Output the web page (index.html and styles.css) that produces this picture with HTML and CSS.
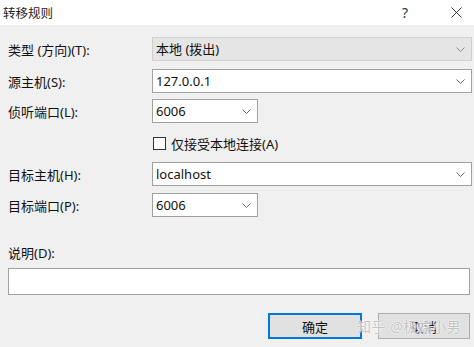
FILE: index.html
```html
<!DOCTYPE html>
<html lang="zh-CN">
<head>
    <meta charset="UTF-8">
    <title>转移规则</title>
    <link rel="stylesheet" href="styles.css">
</head>
<body>
    <div class="dialog">
        <div class="titlebar">
            <span class="title">转移规则</span>
            <div class="title-controls">
                <span class="help">?</span>
                <span class="close">
                    <svg width="11" height="11" viewBox="0 0 11 11"><path d="M0.5 0.5 L10.5 10.5 M10.5 0.5 L0.5 10.5" stroke="#333" stroke-width="1"/></svg>
                </span>
            </div>
        </div>

        <div class="content">
            <div class="row row-type">
                <label>类型 (方向)(T):</label>
                <div class="combo disabled wide">
                    <span class="value">本地 (拨出)</span>
                    <span class="chevron"><svg width="9" height="5" viewBox="0 0 9 5"><path d="M0.5 0.5 L4.5 4.5 L8.5 0.5" fill="none" stroke="#888"/></svg></span>
                </div>
            </div>

            <div class="row row-src">
                <label>源主机(S):</label>
                <div class="combo wide">
                    <span class="value">127.0.0.1</span>
                    <span class="chevron"><svg width="9" height="5" viewBox="0 0 9 5"><path d="M0.5 0.5 L4.5 4.5 L8.5 0.5" fill="none" stroke="#666"/></svg></span>
                </div>
            </div>

            <div class="row row-listen">
                <label>侦听端口(L):</label>
                <div class="combo narrow">
                    <span class="value">6006</span>
                    <span class="chevron"><svg width="9" height="5" viewBox="0 0 9 5"><path d="M0.5 0.5 L4.5 4.5 L8.5 0.5" fill="none" stroke="#666"/></svg></span>
                </div>
            </div>

            <div class="row row-check">
                <span></span>
                <div class="check">
                    <span class="box"></span>
                    <span>仅接受本地连接(A)</span>
                </div>
            </div>

            <div class="row row-dst">
                <label>目标主机(H):</label>
                <div class="combo wide">
                    <span class="value">localhost</span>
                    <span class="chevron"><svg width="9" height="5" viewBox="0 0 9 5"><path d="M0.5 0.5 L4.5 4.5 L8.5 0.5" fill="none" stroke="#666"/></svg></span>
                </div>
            </div>

            <div class="row row-dport">
                <label>目标端口(P):</label>
                <div class="combo narrow">
                    <span class="value">6006</span>
                    <span class="chevron"><svg width="9" height="5" viewBox="0 0 9 5"><path d="M0.5 0.5 L4.5 4.5 L8.5 0.5" fill="none" stroke="#666"/></svg></span>
                </div>
            </div>

            <div class="desc-label">说明(D):</div>
            <div class="desc-input"></div>

            <div class="buttons">
                <button class="btn primary">确定</button>
                <button class="btn">取消</button>
                <span class="watermark">知乎 @极端小男</span>
            </div>
        </div>
    </div>
</body>
</html>
```

FILE: styles.css
```css
* {
    margin: 0;
    padding: 0;
    box-sizing: border-box;
}

body {
    font-family: 'Noto Sans', 'Noto Sans CJK SC', sans-serif;
    font-size: 13px;
    color: #111;
    background: #f0f0f0;
    width: 474px;
    height: 347px;
    overflow: hidden;
}

.dialog {
    display: flex;
    flex-direction: column;
    height: 347px;
}

.titlebar {
    height: 25px;
    background: #fff;
    display: flex;
    justify-content: space-between;
    align-items: center;
    padding-left: 3px;
}

.title {
    font-size: 12.5px;
    color: #222;
}

.title-controls {
    display: flex;
    align-items: center;
}

.help {
    font-size: 14px;
    color: #333;
    width: 20px;
    margin-right: 29px;
}

.close {
    display: flex;
    width: 23px;
    height: 25px;
    align-items: center;
}

.content {
    position: relative;
    padding: 12px 2px 0 8px;
}

.row {
    display: grid;
    grid-template-columns: 144px 1fr;
    align-items: center;
}

.row-src { margin-top: 8px; }
.row-listen { margin-top: 6px; }
.row-check { margin-top: 12px; }
.row-dst { margin-top: 11px; }
.row-dport { margin-top: 7px; }

.combo {
    height: 24px;
    background: #fff;
    border: 1px solid #a0a0a0;
    display: flex;
    align-items: center;
    justify-content: space-between;
    padding: 0 6px 0 3px;
}

.combo.wide {
    width: 320px;
}

.combo.narrow {
    width: 106px;
}

.combo.disabled {
    background: #e5e5e5;
    border-color: #cfcfcf;
}

.combo .value {
    line-height: 1;
}

.chevron {
    display: flex;
}

.check {
    display: flex;
    align-items: center;
    gap: 5px;
    height: 16px;
    padding-left: 1px;
}

.box {
    width: 13px;
    height: 13px;
    border: 1px solid #333;
    background: #fff;
}

.desc-label {
    margin-top: 27px;
    height: 18px;
    line-height: 18px;
}

.desc-input {
    margin-top: 6px;
    height: 27px;
    width: 462px;
    background: #fff;
    border: 1px solid #a0a0a0;
}

.buttons {
    position: relative;
    display: flex;
    gap: 16px;
    margin-top: 18px;
    padding-left: 260px;
}

.btn {
    font-family: inherit;
    font-size: 13px;
    color: #111;
    height: 26px;
    width: 92px;
    background: #e1e1e1;
    border: 1px solid #adadad;
}

.btn.primary {
    width: 94px;
    border: 2px solid #0078d7;
}

/* image watermark laid over the cancel button */
.watermark {
    position: absolute;
    left: 349px;
    top: 3px;
    font-size: 14px;
    color: #c4c4c4;
    letter-spacing: 0.5px;
    text-shadow: 0 0 1px #fff, 0 0 2px #fff;
}
```
